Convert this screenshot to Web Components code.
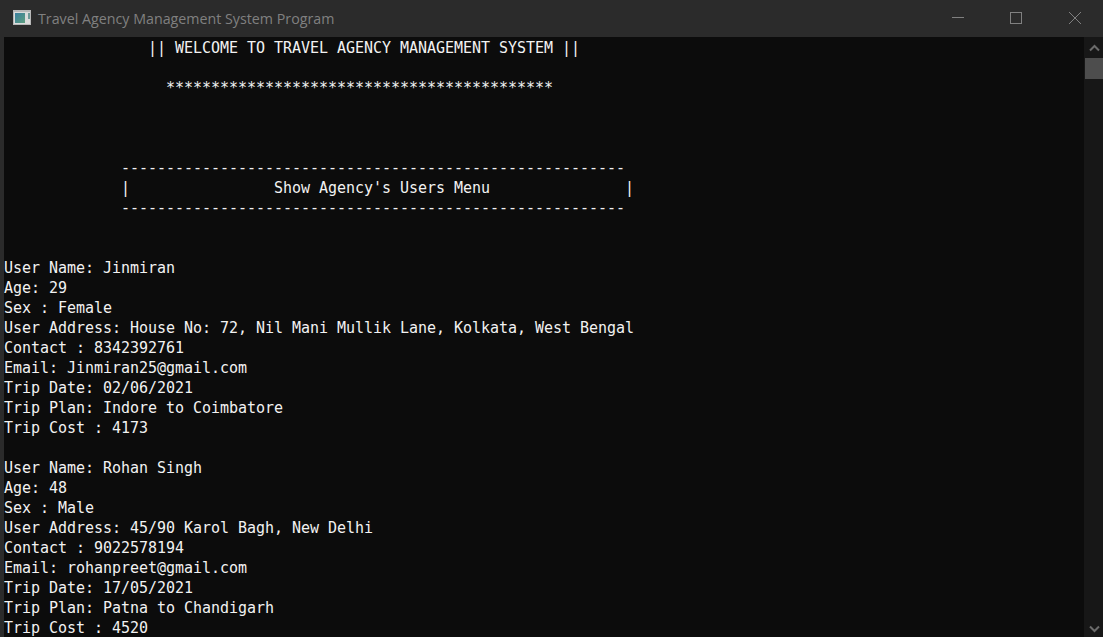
<!DOCTYPE html>
<html lang="en">
<head>
  <meta charset="UTF-8">
  <title>Travel Agency Management System Program</title>
  <style>
    html, body { margin: 0; height: 100%; background: #0c0c0c; overflow: hidden; }
  </style>
</head>
<body>
  <console-window title="Travel Agency Management System Program">
<user-record
 name="Jinmiran" age="29" sex="Female" address="House No: 72, Nil Mani Mullik Lane, Kolkata, West Bengal"
 contact="8342392761" email="Jinmiran25@gmail.com" date="02/06/2021" plan="Indore to Coimbatore" cost="4173"></user-record>
<user-record
 name="Rohan Singh" age="48" sex="Male" address="45/90 Karol Bagh, New Delhi"
 contact="9022578194" email="rohanpreet@gmail.com" date="17/05/2021" plan="Patna to Chandigarh" cost="4520"></user-record>
  </console-window>

  <script>
    customElements.define('title-bar', class extends HTMLElement {
      constructor() {
        super();
        this.attachShadow({ mode: 'open' });
        this.shadowRoot.innerHTML = `
          <style>
            :host {
              display: flex;
              align-items: center;
              height: 37px;
              background: #2b2b2b;
              color: #808080;
              font: 14.25px 'Open Sans', sans-serif;
            }
            .icon { width: 18px; height: 15px; margin: 0 7px 2px 13px; flex: none; }
            .text { flex: 1; padding-bottom: 1px; white-space: nowrap; }
            .btn { width: 58px; height: 37px; flex: none; }
            .btn svg { display: block; width: 58px; height: 37px; }
          </style>
          <svg class="icon" viewBox="0 0 18 15">
            <defs>
              <linearGradient id="g" x1="0" y1="0" x2="1" y2="1">
                <stop offset="0" stop-color="#3a7f9f"/>
                <stop offset="1" stop-color="#5f9f7f"/>
              </linearGradient>
            </defs>
            <rect width="18" height="15" fill="#b8b8b8"/>
            <rect x="1" y="2" width="16" height="12" fill="#dcdcdc"/>
            <rect x="2" y="3" width="10" height="10" fill="url(#g)"/>
            <rect x="15" y="3" width="2" height="6" fill="#6f9a98"/>
          </svg>
          <span class="text"><slot></slot></span>
          <span class="btn"><svg viewBox="0 0 58 37"><path d="M23 17.500H35" stroke="#808080" fill="none"/></svg></span>
          <span class="btn"><svg viewBox="0 0 58 37"><rect x="23.500" y="12.500" width="11" height="11" stroke="#808080" fill="none"/></svg></span>
          <span class="btn"><svg viewBox="0 0 58 37"><path d="M24 12L36 24M36 12L24 24" stroke="#808080" fill="none"/></svg></span>
        `;
      }
    });

    customElements.define('scroll-bar', class extends HTMLElement {
      constructor() {
        super();
        this.attachShadow({ mode: 'open' });
        this.shadowRoot.innerHTML = `
          <style>
            :host {
              display: flex;
              flex-direction: column;
              width: 19px;
              flex: none;
              background: #171717;
            }
            svg { display: block; width: 19px; height: 21px; flex: none; }
            .thumb { height: 21px; margin-left: 1px; background: #4d4d4d; flex: none; }
            .track { flex: 1; }
          </style>
          <svg viewBox="0 0 19 21"><path d="M6 13.500L10.500 9L15 13.500" stroke="#6b6b6b" stroke-width="2" fill="none"/></svg>
          <div class="thumb"></div>
          <div class="track"></div>
          <svg viewBox="0 0 19 21"><path d="M6 10.500L10.500 15L15 10.500" stroke="#6b6b6b" stroke-width="2" fill="none"/></svg>
        `;
      }
    });

    customElements.define('user-record', class extends HTMLElement {
      constructor() {
        super();
        this.attachShadow({ mode: 'open' });
        const a = (n) => this.getAttribute(n);
        this.shadowRoot.innerHTML = `
          <style>
            :host { display: block; margin-bottom: 20px; }
            div { height: 20px; white-space: pre; }
          </style>
          <div>User Name: ${a('name')}</div>
          <div>Age: ${a('age')}</div>
          <div>Sex : ${a('sex')}</div>
          <div>User Address: ${a('address')}</div>
          <div>Contact : ${a('contact')}</div>
          <div>Email: ${a('email')}</div>
          <div>Trip Date: ${a('date')}</div>
          <div>Trip Plan: ${a('plan')}</div>
          <div>Trip Cost : ${a('cost')}</div>
        `;
      }
    });

    customElements.define('console-window', class extends HTMLElement {
      constructor() {
        super();
        this.attachShadow({ mode: 'open' });
        const dashes = '-'.repeat(56);
        const lines = [
          ' '.repeat(16) + '|| WELCOME TO TRAVEL AGENCY MANAGEMENT SYSTEM ||',
          '',
          ' '.repeat(18) + '*'.repeat(43),
          '', '', '',
          ' '.repeat(13) + dashes,
          ' '.repeat(13) + '|' + ' '.repeat(16) + "Show Agency's Users Menu" + ' '.repeat(15) + '|',
          ' '.repeat(13) + dashes,
          '', ''
        ];
        this.shadowRoot.innerHTML = `
          <style>
            :host {
              display: flex;
              flex-direction: column;
              width: 1103px;
              height: 637px;
              overflow: hidden;
              background: #2b2b2b;
            }
            .body { display: flex; flex: 1; min-height: 0; padding-left: 4px; }
            .screen {
              flex: 1;
              min-width: 0;
              overflow: hidden;
              padding-top: 1px;
              background: #0c0c0c;
              color: #f2f2f2;
              font: 15px/20px 'DejaVu Sans Mono', monospace;
              letter-spacing: -0.03px;
            }
            .head div { height: 20px; white-space: pre; }
          </style>
          <title-bar>${this.getAttribute('title')}</title-bar>
          <div class="body">
            <div class="screen">
              <div class="head">${lines.map(l => `<div>${l}</div>`).join('')}</div>
              <slot></slot>
            </div>
            <scroll-bar></scroll-bar>
          </div>
        `;
      }
    });
  </script>
</body>
</html>
